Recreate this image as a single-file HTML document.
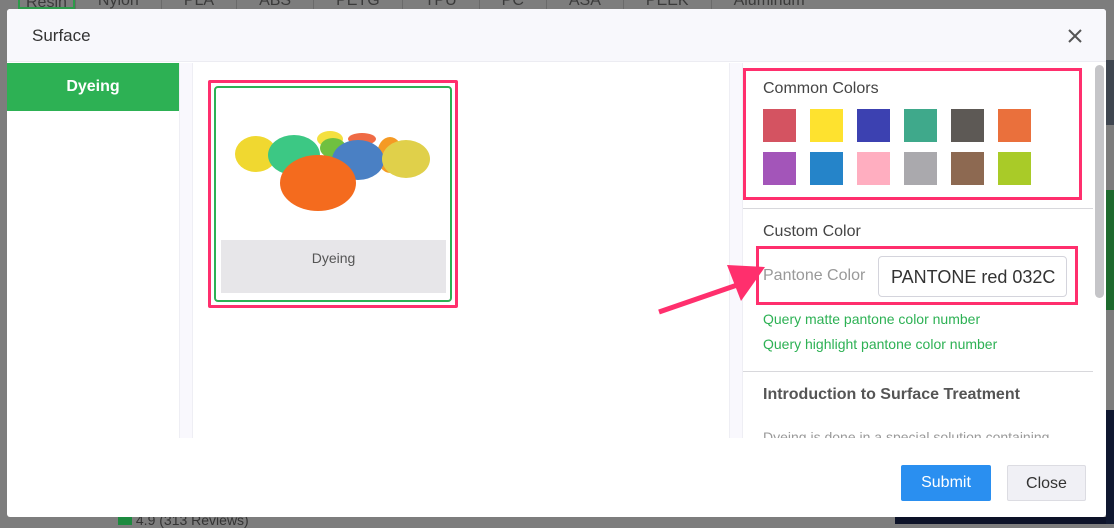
<!DOCTYPE html>
<html><head><meta charset="utf-8"><style>
*{box-sizing:border-box;margin:0;padding:0}
body{width:1114px;height:524px;overflow:hidden;background:#7d7d7d;font-family:"Liberation Sans",Arial,sans-serif;position:relative}
.tabs{position:absolute;top:-8px;left:18px;height:17px;display:flex;color:#3a3a3a;font-size:16px}
.tabs span{padding:0 22px;border-left:1px solid #6a6a6a;line-height:17px}
.modal{position:absolute;left:7px;top:9px;width:1099px;height:508px;background:#fff;border-radius:3px;overflow:hidden}
.hdr{height:53px;background:#f8f8fc;border-bottom:1px solid #ececf2;font-size:17px;color:#333;padding:17px 0 0 25px}
.side{position:absolute;left:0;top:54px;width:172px;height:48px;background:#2db154;color:#fff;font-size:16px;font-weight:bold;text-align:center;line-height:48px}
.strip{position:absolute;top:54px;height:375px;width:14px;background:#f9f8fd;border-left:1px solid #eeeef4;border-right:1px solid #eeeef4}
.card{position:absolute;left:201px;top:71px;width:250px;height:228px;border:3px solid #ff2f6d;border-radius:2px}
.inner{position:absolute;left:3px;top:3px;width:238px;height:216px;border:2px solid #2db154;border-radius:4px}
.cap{position:absolute;left:5px;top:152px;width:225px;height:53px;background:#e7e6e9;color:#555;font-size:14px;text-align:center;line-height:36px}
.rp{position:absolute;left:736px;top:54px;width:350px;height:375px;overflow:hidden}
h3{font-size:16px;font-weight:normal;color:#444}
.cc{position:absolute;left:0;top:5px;width:339px;height:132px;border:3px solid #ff2f6d;padding:9px 0 0 17px}
.sw{display:grid;grid-template-columns:repeat(6,33px);gap:10px 14px;margin-top:11px}
.sw i{display:block;width:33px;height:33px}
.sep{position:absolute;left:0;width:350px;height:1px;background:#d8d8dc}
.link{color:#2db154;font-size:14px;position:absolute;left:20px}
.sb{position:absolute;left:1088px;top:56px;width:9px;height:233px;background:#c5c5c8;border-radius:5px}
.btn{position:absolute;top:456px;height:36px;font-size:16px;line-height:36px;text-align:center;border-radius:2px}
</style></head><body>
<div class="tabs"><span style="border:2px solid #2d9a4a;padding:0 6px">Resin</span><span>Nylon</span><span>PLA</span><span>ABS</span><span>PETG</span><span>TPU</span><span>PC</span><span>ASA</span><span>PEEK</span><span>Aluminum</span></div>
<div style="position:absolute;left:1106px;top:60px;width:8px;height:65px;background:#3f4650"></div>
<div style="position:absolute;left:1106px;top:190px;width:8px;height:120px;background:#1e6a2e"></div>
<div style="position:absolute;left:1106px;top:410px;width:8px;height:114px;background:#0f1830"></div>
<div style="position:absolute;left:118px;top:512px;font-size:14px;color:#333"><span style="display:inline-block;width:14px;height:12px;background:#1d8a3f"></span> 4.9 (313 Reviews)</div>
<div style="position:absolute;left:895px;top:517px;width:211px;height:7px;background:#0c1228"></div>
<div class="modal">
<div class="hdr">Surface</div>
<svg style="position:absolute;left:1061px;top:20px" width="14" height="14"><path d="M1 1L13 13M13 1L1 13" stroke="#555" stroke-width="2"/></svg>
<div class="side">Dyeing</div>
<div class="strip" style="left:172px"></div>
<div class="strip" style="left:722px"></div>
<div class="card"><div class="inner">
<svg width="234" height="150" style="position:absolute;left:0;top:0">
<ellipse cx="40" cy="66" rx="21" ry="18" fill="#f0d830"/>
<ellipse cx="114" cy="51" rx="13" ry="8" fill="#f4e040"/>
<ellipse cx="146" cy="51" rx="14" ry="6" fill="#ef6a44"/>
<ellipse cx="174" cy="67" rx="13" ry="18" fill="#f59a24"/>
<ellipse cx="78" cy="67" rx="26" ry="20" fill="#3cc884"/>
<ellipse cx="117" cy="60" rx="13" ry="10" fill="#70c040"/>
<ellipse cx="142" cy="72" rx="26" ry="20" fill="#4a80c4"/>
<ellipse cx="190" cy="71" rx="24" ry="19" fill="#e0d04a"/>
<ellipse cx="102" cy="95" rx="38" ry="28" fill="#f46b1e"/>
</svg>
<div class="cap">Dyeing</div></div></div>
<svg style="position:absolute;left:640px;top:250px" width="120" height="60"><path d="M12 53 L96 24" stroke="#ff2f6d" stroke-width="5"/><path d="M80 6 L118 8 L94 42 Z" fill="#ff2f6d"/></svg>
<div class="rp">
<div class="cc"><h3>Common Colors</h3><div class="sw">
<i style="background:#d45361"></i><i style="background:#fee22f"></i><i style="background:#3c41b1"></i><i style="background:#3fa98b"></i><i style="background:#5d5955"></i><i style="background:#ea703c"></i>
<i style="background:#a355b9"></i><i style="background:#2584c9"></i><i style="background:#ffaec0"></i><i style="background:#aaa9ad"></i><i style="background:#8d6951"></i><i style="background:#a9cb28"></i></div></div>
<div class="sep" style="top:145px"></div>
<h3 style="position:absolute;left:20px;top:160px">Custom Color</h3>
<div style="position:absolute;left:13px;top:183px;width:322px;height:59px;border:3px solid #ff2f6d"></div>
<div style="position:absolute;left:20px;top:204px;font-size:16px;color:#999">Pantone Color</div>
<div style="position:absolute;left:135px;top:193px;width:189px;height:41px;border:1px solid #d4d4dc;border-radius:4px;font-size:18px;color:#333;padding:10px 0 0 12px;white-space:nowrap;overflow:hidden">PANTONE red 032C</div>
<div class="link" style="top:248px">Query matte pantone color number</div>
<div class="link" style="top:273px">Query highlight pantone color number</div>
<div class="sep" style="top:308px"></div>
<div style="position:absolute;left:20px;top:323px;font-size:16px;font-weight:bold;color:#555">Introduction to Surface Treatment</div>
<div style="position:absolute;left:20px;top:366px;font-size:14px;color:#999;white-space:nowrap">Dyeing is done in a special solution containing</div>
</div>
<div class="sb"></div>
<div class="btn" style="left:894px;width:90px;background:#2a8ff0;color:#fff">Submit</div>
<div class="btn" style="left:1000px;width:79px;background:#f0f0f5;border:1px solid #dcdce2;color:#333">Close</div>
</div>
</body></html>
